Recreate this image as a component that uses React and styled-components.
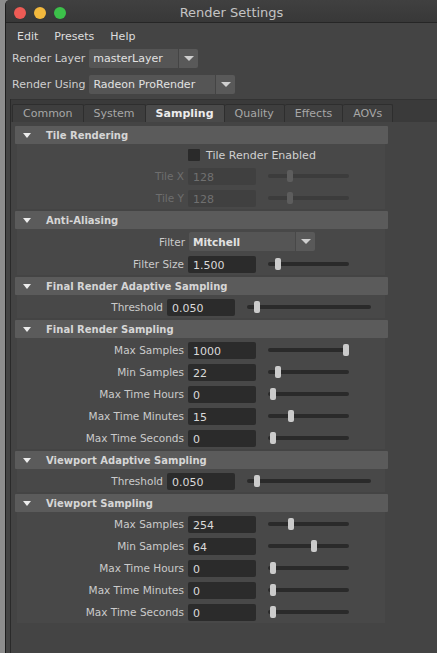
import React from "react";
import styled, { createGlobalStyle } from "styled-components";

const GlobalStyle = createGlobalStyle`
  html, body {
    margin: 0;
    padding: 0;
    background: #444444;
  }
  body {
    font-family: "DejaVu Sans", "Liberation Sans", sans-serif;
    font-size: 10.5px;
    color: #c9c9c9;
  }
`;

const Page = styled.div`
  display: flex;
  width: 437px;
  height: 653px;
  overflow: hidden;
  background: #8d8d8d;
`;

const Window = styled.div`
  flex: 1;
  margin-left: 5px;
  display: flex;
  flex-direction: column;
  background: #444444;
  border-left: 1px solid #1d1d1d;
  border-top-left-radius: 5px;
  overflow: hidden;
`;

const TitleBar = styled.div`
  height: 23px;
  flex: none;
  display: flex;
  align-items: center;
  padding: 3px 0 0 8px;
  box-sizing: border-box;
  background: linear-gradient(#404040, #383838);
  border-bottom: 1px solid #262626;
`;

const Lights = styled.div`
  display: flex;
  gap: 8px;
`;

const Light = styled.span`
  width: 12px;
  height: 12px;
  border-radius: 50%;
  background: ${({ color }) => color};
`;

const Title = styled.div`
  flex: 1;
  text-align: center;
  padding-right: 40px;
  font-size: 13px;
  color: #c4c4c4;
`;

const MenuBar = styled.div`
  display: flex;
  gap: 16px;
  height: 24px;
  align-items: center;
  padding: 3px 0 0 11px;
  box-sizing: border-box;
  font-size: 11px;
  color: #dedede;
`;

const Top = styled.div`
  display: flex;
  flex-direction: column;
  gap: 7px;
  padding: 2px 0 5px 6px;
`;

const TopRow = styled.div`
  display: flex;
  align-items: center;
  gap: 4px;
  font-size: 11px;
  color: #cfcfcf;
`;

const Dropdown = styled.div`
  display: flex;
  height: 19px;
  gap: 1px;
`;

const DropValue = styled.div`
  width: ${({ $w }) => $w}px;
  background: #555555;
  color: #e2e2e2;
  font-weight: ${({ $bold }) => ($bold ? "bold" : "normal")};
  font-size: ${({ $bold }) => ($bold ? 10.5 : 11)}px;
  display: flex;
  align-items: center;
  padding-left: 4px;
  box-sizing: border-box;
  border-radius: 2px 0 0 2px;
`;

const DropArrow = styled.div`
  width: 19px;
  background: #595959;
  display: flex;
  align-items: center;
  justify-content: center;
  border-radius: 0 2px 2px 0;
  &::after {
    content: "";
    border-left: 5px solid transparent;
    border-right: 5px solid transparent;
    border-top: 5px solid #cfcfcf;
  }
`;

const TabFrame = styled.div`
  flex: 1;
  margin-left: 4px;
  border-left: 1px solid #2a2a2a;
  display: flex;
  flex-direction: column;
`;

const TabStrip = styled.div`
  display: flex;
  padding: 4px 0 0 1px;
  background: #3a3a3a;
  border-top: 1px solid #333;
`;

const Tab = styled.div`
  height: 17px;
  line-height: 17px;
  padding: 0 10px;
  background: ${({ $active }) => ($active ? "#4a4a4a" : "#3e3e3e")};
  color: ${({ $active }) => ($active ? "#ececec" : "#a7a7a7")};
  font-weight: ${({ $active }) => ($active ? "bold" : "normal")};
  border: 1px solid #2e2e2e;
  border-bottom: none;
  border-left-width: ${({ $first }) => ($first ? 1 : 0)}px;
  border-radius: 2px 2px 0 0;
  font-size: 11px;
`;

const Panel = styled.div`
  flex: 1;
  background: #444444;
  padding: 4px 0 0 4px;
`;

const Section = styled.div`
  width: 373px;
  margin-bottom: 2px;
`;

const SectionHeader = styled.div`
  height: 18px;
  display: flex;
  align-items: center;
  gap: 15px;
  padding-left: 8px;
  background: #5b5b5b;
  border-radius: 1px;
  font-weight: bold;
  font-size: 10px;
  color: #d6d6d6;
  &::before {
    content: "";
    border-left: 4.5px solid transparent;
    border-right: 4.5px solid transparent;
    border-top: 5px solid #ececec;
  }
`;

const SectionBody = styled.div`
  margin: 0 3px 0 2px;
  background: #484848;
  padding: 3px 0 2px;
  display: flex;
  flex-direction: column;
  gap: 4px;
`;

const Row = styled.div`
  display: flex;
  align-items: center;
  height: ${({ $h }) => $h || 18}px;
`;

const Label = styled.div`
  width: ${({ $w }) => $w}px;
  flex: none;
  box-sizing: border-box;
  padding-right: 4px;
  text-align: right;
  white-space: nowrap;
  color: ${({ $dim }) => ($dim ? "#6e6e6e" : "#cbcbcb")};
`;

const Field = styled.div`
  width: 68px;
  height: 17px;
  flex: none;
  box-sizing: border-box;
  padding: 2px 0 0 5px;
  display: flex;
  align-items: center;
  border-radius: 2px;
  background: ${({ $dim }) => ($dim ? "#404040" : "#2b2b2b")};
  color: ${({ $dim }) => ($dim ? "#707070" : "#dadada")};
  font-size: 11px;
`;

const Slider = styled.div`
  position: relative;
  width: ${({ $w }) => $w}px;
  height: 12px;
  margin-left: 12px;
  &::before {
    content: "";
    position: absolute;
    left: 0;
    right: 0;
    top: 4px;
    height: 4px;
    border-radius: 2px;
    background: ${({ $dim }) => ($dim ? "#3c3c3c" : "#2a2a2a")};
  }
`;

const Thumb = styled.span`
  position: absolute;
  top: 0;
  width: 6px;
  height: 12px;
  border-radius: 2px;
  background: ${({ $dim }) => ($dim ? "#5d5d5d" : "#cbcbcb")};
`;

const CheckBox = styled.span`
  width: 12px;
  height: 12px;
  background: #2a2a2a;
  border-radius: 1px;
  margin-right: 6px;
`;

const CheckText = styled.span`
  color: #d0d0d0;
  font-size: 11px;
`;

const NumberRow = ({ label, value, thumb, labelW = 171, trackW = 81, dim }) => (
  <Row>
    <Label $w={labelW} $dim={dim}>
      {label}
    </Label>
    <Field $dim={dim}>{value}</Field>
    <Slider $w={trackW} $dim={dim}>
      <Thumb $dim={dim} style={{ left: thumb }} />
    </Slider>
  </Row>
);

const Block = ({ title, children }) => (
  <Section>
    <SectionHeader>{title}</SectionHeader>
    <SectionBody>{children}</SectionBody>
  </Section>
);

const tabs = ["Common", "System", "Sampling", "Quality", "Effects", "AOVs"];

const finalRender = [
  ["Max Samples", "1000", 75],
  ["Min Samples", "22", 7],
  ["Max Time Hours", "0", 2],
  ["Max Time Minutes", "15", 20],
  ["Max Time Seconds", "0", 2],
];

const viewport = [
  ["Max Samples", "254", 20],
  ["Min Samples", "64", 43],
  ["Max Time Hours", "0", 2],
  ["Max Time Minutes", "0", 2],
  ["Max Time Seconds", "0", 2],
];

export default function App() {
  return (
    <>
      <GlobalStyle />
      <Page>
        <Window>
          <TitleBar>
            <Lights>
              <Light color="#ee5b55" />
              <Light color="#f3b93d" />
              <Light color="#3cc14a" />
            </Lights>
            <Title>Render Settings</Title>
          </TitleBar>

          <MenuBar>
            <span>Edit</span>
            <span>Presets</span>
            <span>Help</span>
          </MenuBar>

          <Top>
            <TopRow>
              <span>Render Layer</span>
              <Dropdown>
                <DropValue $w={89}>masterLayer</DropValue>
                <DropArrow />
              </Dropdown>
            </TopRow>
            <TopRow>
              <span>Render Using</span>
              <Dropdown>
                <DropValue $w={126}>Radeon ProRender</DropValue>
                <DropArrow />
              </Dropdown>
            </TopRow>
          </Top>

          <TabFrame>
            <TabStrip>
              {tabs.map((name, i) => (
                <Tab key={name} $first={i === 0} $active={name === "Sampling"}>
                  {name}
                </Tab>
              ))}
            </TabStrip>

            <Panel>
              <Block title="Tile Rendering">
                <Row $h={16}>
                  <Label $w={171} />
                  <CheckBox />
                  <CheckText>Tile Render Enabled</CheckText>
                </Row>
                <NumberRow label="Tile X" value="128" thumb={19} dim />
                <NumberRow label="Tile Y" value="128" thumb={19} dim />
              </Block>

              <Block title="Anti-Aliasing">
                <Row $h={19}>
                  <Label $w={172}>Filter</Label>
                  <Dropdown>
                    <DropValue $w={106} $bold>
                      Mitchell
                    </DropValue>
                    <DropArrow />
                  </Dropdown>
                </Row>
                <NumberRow label="Filter Size" value="1.500" thumb={7} />
              </Block>

              <Block title="Final Render Adaptive Sampling">
                <NumberRow label="Threshold" value="0.050" thumb={7} labelW={150} trackW={124} />
              </Block>

              <Block title="Final Render Sampling">
                {finalRender.map(([label, value, thumb]) => (
                  <NumberRow key={label} label={label} value={value} thumb={thumb} />
                ))}
              </Block>

              <Block title="Viewport Adaptive Sampling">
                <NumberRow label="Threshold" value="0.050" thumb={7} labelW={150} trackW={124} />
              </Block>

              <Block title="Viewport Sampling">
                {viewport.map(([label, value, thumb]) => (
                  <NumberRow key={label} label={label} value={value} thumb={thumb} />
                ))}
              </Block>
            </Panel>
          </TabFrame>
        </Window>
      </Page>
    </>
  );
}
